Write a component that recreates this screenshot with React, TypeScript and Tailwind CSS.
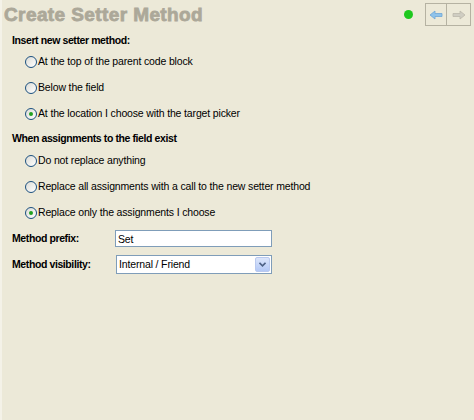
import { useState } from "react";

function Radio({ checked, label, onClick }: { checked: boolean; label: string; onClick: () => void }) {
  return (
    <div className="flex h-[20px] items-center pl-[23px]" onClick={onClick}>
      <span className="flex h-[12px] w-[12px] items-center justify-center rounded-full border border-[#1c5180] bg-gradient-to-br from-[#dcdcd6] to-white">
        {checked && <span className="h-[4px] w-[4px] rounded-full bg-[#21a121]" />}
      </span>
      <span className="ml-[1px] whitespace-nowrap text-[10.5px] tracking-[-0.15px] text-black">{label}</span>
    </div>
  );
}

export default function App() {
  const [insertAt, setInsertAt] = useState(2);
  const [replace, setReplace] = useState(2);

  const insertOptions = [
    "At the top of the parent code block",
    "Below the field",
    "At the location I choose with the target picker",
  ];
  const replaceOptions = [
    "Do not replace anything",
    "Replace all assignments with a call to the new setter method",
    "Replace only the assignments I choose",
  ];

  return (
    <div className="flex h-[420px] w-[474px] flex-col border-l-2 border-[#f4f2e8] bg-[#ece9d8] font-['Liberation_Sans',sans-serif]">
      {/* Header */}
      <div className="flex h-[29px] items-center justify-between pl-[2px] pr-[3px]">
        <h1 className="mt-[1px] text-[19px] font-black tracking-[0.4px] text-[#aca899] [-webkit-text-stroke:0.8px_#aca899]">
          Create Setter Method
        </h1>
        <div className="flex items-center">
          <span className="mr-[12px] h-[9px] w-[9px] rounded-full bg-[#1ec81e]" />
          <div className="flex h-[23px] border border-[#b5b2a2]">
            <button className="flex h-full w-[21px] items-center justify-center border-r border-[#b5b2a2]">
              <svg width="14" height="10" viewBox="0 0 14 10">
                <path d="M1 5 L6 1 L6 3.5 L13 3.5 L13 6.5 L6 6.5 L6 9 Z" fill="#8fc3ea" stroke="#6ea6d6" strokeWidth="0.8" />
              </svg>
            </button>
            <button className="flex h-full w-[23px] items-center justify-center">
              <svg width="14" height="10" viewBox="0 0 14 10">
                <path d="M13 5 L8 1 L8 3.5 L1 3.5 L1 6.5 L8 6.5 L8 9 Z" fill="#cfcdc2" stroke="#bbb8ab" strokeWidth="0.8" />
              </svg>
            </button>
          </div>
        </div>
      </div>

      <div className="flex flex-col">
        {/* Insert section */}
        <div className="mt-[3px] flex h-[18px] items-center whitespace-nowrap pl-[10px] text-[10.5px] font-bold tracking-[-0.4px] text-black">
          Insert new setter method:
        </div>
        <div className="mt-[2px] flex flex-col gap-[6px]">
          {insertOptions.map((o, i) => (
            <Radio key={i} label={o} checked={insertAt === i} onClick={() => setInsertAt(i)} />
          ))}
        </div>

        {/* Replace section */}
        <div className="mt-[6px] flex h-[18px] items-center whitespace-nowrap pl-[10px] text-[10.5px] font-bold tracking-[-0.4px] text-black">
          When assignments to the field exist
        </div>
        <div className="mt-[3px] flex flex-col gap-[6px]">
          {replaceOptions.map((o, i) => (
            <Radio key={i} label={o} checked={replace === i} onClick={() => setReplace(i)} />
          ))}
        </div>

        {/* Form fields */}
        <div className="mt-[7px] flex h-[17px] items-center">
          <span className="w-[113px] whitespace-nowrap pl-[10px] text-[10.5px] font-bold tracking-[-0.4px] text-black">Method prefix:</span>
          <input
            defaultValue="Set"
            className="h-[17px] w-[157px] border border-[#7f9db9] bg-white px-[2px] font-['Liberation_Sans',sans-serif] text-[10.5px] tracking-[-0.15px] text-black outline-none"
          />
        </div>
        <div className="mt-[8px] flex h-[19px] items-center">
          <span className="w-[114px] whitespace-nowrap pl-[10px] text-[10.5px] font-bold tracking-[-0.4px] text-black">Method visibility:</span>
          <div className="flex h-[19px] w-[156px] items-center justify-between border border-[#7f9db9] bg-white pl-[2px] pr-[1px]">
            <span className="text-[10.5px] tracking-[-0.15px] text-black">Internal / Friend</span>
            <span className="flex h-[15px] w-[15px] items-center justify-center rounded-[2px] border border-[#b9c9ef] bg-gradient-to-b from-[#dce6fb] to-[#b3c8f5]">
              <svg width="7" height="5" viewBox="0 0 7 5">
                <path d="M0.5 0.8 L3.5 3.8 L6.5 0.8" fill="none" stroke="#4d6185" strokeWidth="1.6" />
              </svg>
            </span>
          </div>
        </div>
      </div>
    </div>
  );
}
